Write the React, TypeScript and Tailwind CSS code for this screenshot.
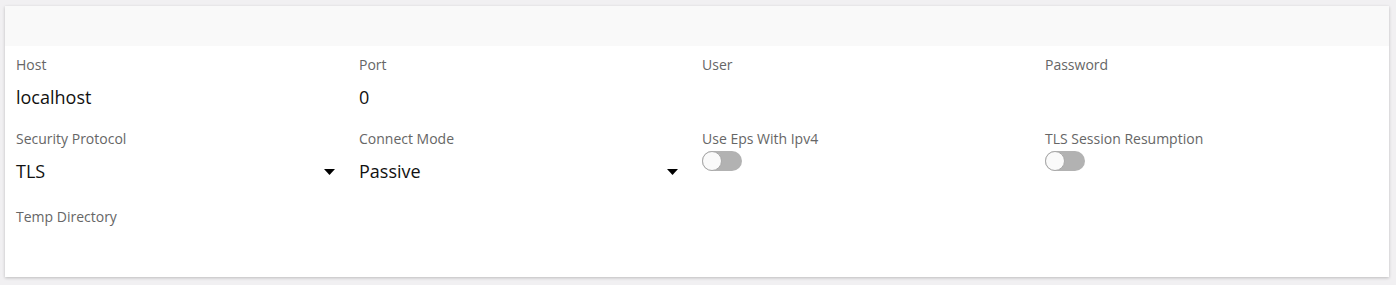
import React from "react";

const font = { fontFamily: '"Open Sans", "Noto Sans", sans-serif' };

function Label({ children }: { children: React.ReactNode }) {
  return <div className="h-5 text-[14px] leading-5 text-[#666666]">{children}</div>;
}

function TextField({ label, value }: { label: string; value?: string }) {
  return (
    <div className="px-[5px]">
      <Label>{label}</Label>
      <div className="h-[44px] flex items-center text-[18px] text-[#111111]">{value ?? ""}</div>
    </div>
  );
}

function SelectField({ label, value }: { label: string; value: string }) {
  return (
    <div className="px-[5px]">
      <Label>{label}</Label>
      <div className="h-[44px] flex items-center justify-between text-[18px] text-[#111111] pr-[14px]">
        <span>{value}</span>
        <svg width="11" height="6" viewBox="0 0 11 6" className="mt-[2px]">
          <path d="M0 0 L11 0 L5.5 6 Z" fill="#000" />
        </svg>
      </div>
    </div>
  );
}

function ToggleField({ label }: { label: string }) {
  return (
    <div className="px-[5px]">
      <Label>{label}</Label>
      <div className="h-[44px] pt-[2px]">
        <div className="relative w-10 h-5 rounded-full bg-[#b2b2b2]">
          <div className="absolute left-0 top-0 w-5 h-5 rounded-full bg-[#fafafa] border border-[#a8a8a8]" />
        </div>
      </div>
    </div>
  );
}

export default function App() {
  return (
    <div className="w-[1396px] h-[285px] bg-[#f1f0f2] pt-[6px] pl-[5px]" style={font}>
      <div className="w-[1384px] h-[271px] bg-white shadow-[0_1px_3px_rgba(0,0,0,0.22)] flex flex-col">
        <div className="h-10 bg-[#f9f9f9]" />
        <div className="px-[6px] pt-[9px] pb-[6px] grid grid-cols-4 gap-y-[10px]">
          <TextField label="Host" value="localhost" />
          <TextField label="Port" value="0" />
          <TextField label="User" />
          <TextField label="Password" />
          <SelectField label="Security Protocol" value="TLS" />
          <SelectField label="Connect Mode" value="Passive" />
          <ToggleField label="Use Eps With Ipv4" />
          <ToggleField label="TLS Session Resumption" />
          <div className="mt-[4px]">
            <TextField label="Temp Directory" />
          </div>
        </div>
      </div>
    </div>
  );
}
